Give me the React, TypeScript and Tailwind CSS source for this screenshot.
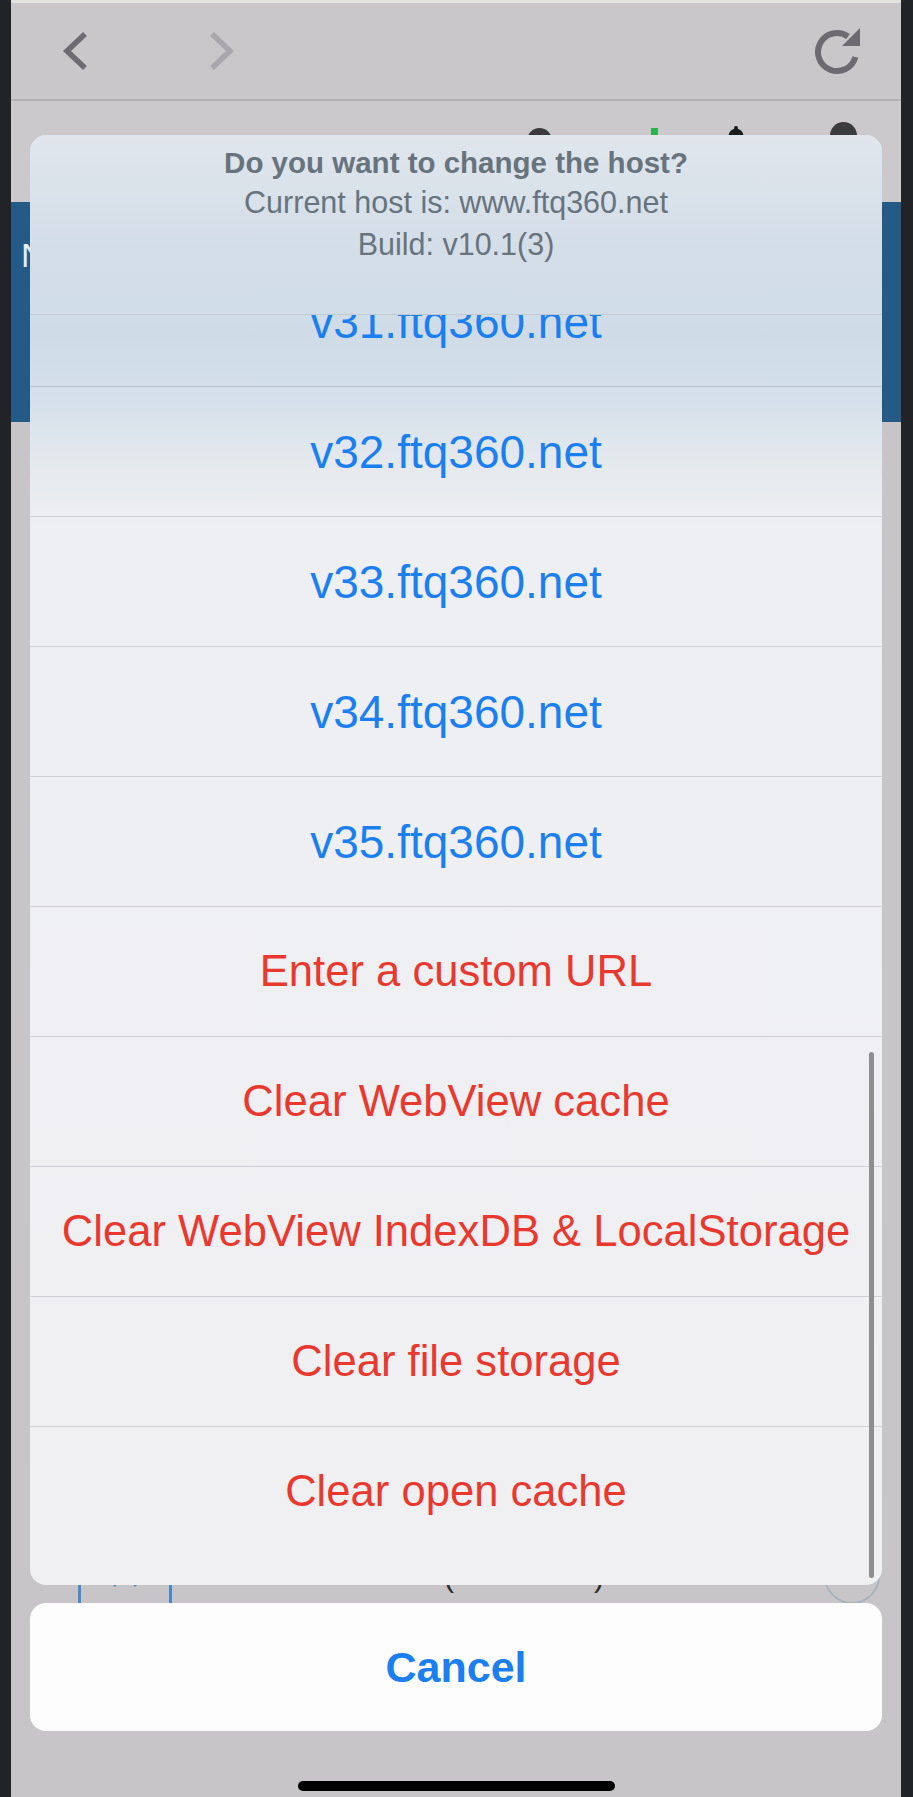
const hosts = ['v31.ftq360.net', 'v32.ftq360.net', 'v33.ftq360.net', 'v34.ftq360.net', 'v35.ftq360.net']

const actions = [
  'Enter a custom URL',
  'Clear WebView cache',
  'Clear WebView IndexDB & LocalStorage',
  'Clear file storage',
  'Clear open cache',
]

function Toolbar() {
  return (
    <div className="flex h-[98px] items-start border-b-2 border-[#b4b2b5] bg-[#c9c7ca]">
      <svg className="ml-[51px] mt-[28px]" width="26" height="40" viewBox="0 0 26 40">
        <polyline points="23,3 5,20 23,37" fill="none" stroke="#6e6c70" strokeWidth="5.5" />
      </svg>
      <svg className="ml-[121px] mt-[28px]" width="26" height="40" viewBox="0 0 26 40">
        <polyline points="3,3 21,20 3,37" fill="none" stroke="#a9a7ab" strokeWidth="5.5" />
      </svg>
      <svg className="ml-auto mr-[40px] mt-[25px]" width="48" height="48" viewBox="-24 -24 48 48">
        <path d="M 18.4 4.9 A 19 19 0 1 1 11 -15.5" fill="none" stroke="#6d6b6f" strokeWidth="6" />
        <polygon points="5,-6 23,-24 23,-6" fill="#6d6b6f" />
      </svg>
    </div>
  )
}

function PageBehind() {
  return (
    <>
      <div className="flex h-[101px] items-start bg-[#cbc9cc]">
        <div className="ml-[516px] mt-[27px] h-[25px] w-[25px] rounded-full bg-[#3a3a3c]" />
        <div className="ml-[99px] mt-[27px] h-[14px] w-[7px] bg-[#2fb14b]" />
        <svg className="ml-[67px] mt-[25px]" width="22" height="26" viewBox="0 0 22 26">
          <path d="M11 0 C9 0 9 2 9 3 C5 4 3 8 3 13 L3 19 L0 22 L22 22 L19 19 L19 13 C19 8 17 4 13 3 C13 2 13 0 11 0 Z" fill="#1c1c1e" />
        </svg>
        <div className="ml-[83px] mt-[21px] h-[27px] w-[27px] rounded-full bg-[#3b3b3d]" />
      </div>
      <div className="h-[220px] bg-[#255a86] pl-[10px] pt-[36px]">
        <span className="text-[34px] leading-none text-[#e6edf3]">N</span>
      </div>
      <div className="flex items-start pt-[1120px]">
        <div className="ml-[67px] flex h-[94px] w-[94px] items-start justify-center rounded-[4px] border-[3px] border-[#4a88c6] pt-[14px]">
          <svg width="40" height="44" viewBox="0 0 40 44">
            <path d="M20 2 L36 22 L30 28 L20 16 L10 28 L4 22 Z" fill="#4d8dcb" />
          </svg>
        </div>
        <span className="ml-[272px] mt-[20px] text-[30px] leading-none text-[#2a2a2a]">(</span>
        <span className="ml-[140px] mt-[20px] text-[30px] leading-none text-[#2a2a2a]">)</span>
        <div className="ml-auto mr-[21px] mt-[6px] h-[56px] w-[56px] rounded-full border-2 border-[#a8b3bc]" />
      </div>
    </>
  )
}

function ActionSheet() {
  return (
    <div className="absolute inset-0 flex flex-col px-[19px] pt-[135px]">
      <div className="relative flex h-[1450px] flex-col overflow-hidden rounded-[16px] bg-[linear-gradient(180deg,#e0e6ec_0px,#d4dee8_110px,#cfdce7_200px,#d5e0ea_265px,#e6eaee_335px,#eeeff2_390px,#f0f0f3_100%)]">
        <div className="h-[180px] shrink-0 border-b border-[#c2cad2] pt-[10px] text-center text-[#67737d]">
          <div className="text-[29.5px] font-bold leading-[36px]">Do you want to change the host?</div>
          <div className="text-[30.5px] leading-[42px]">Current host is: www.ftq360.net</div>
          <div className="text-[30.5px] leading-[42px]">Build: v10.1(3)</div>
        </div>
        <div className="flex-1 overflow-hidden">
          <div className="-mt-[59px]">
            {hosts.map((h) => (
              <div
                key={h}
                className="flex h-[130px] items-center justify-center border-t border-[rgba(60,60,67,0.17)] text-[46px] leading-none text-[#1b7ff0]"
              >
                {h}
              </div>
            ))}
            {actions.map((a) => (
              <div
                key={a}
                className="flex h-[130px] items-center justify-center border-t border-[rgba(60,60,67,0.17)] text-[43.6px] leading-none text-[#e9392f]"
              >
                {a}
              </div>
            ))}
          </div>
        </div>
        <div className="absolute right-[8px] top-[917px] h-[526px] w-[5px] rounded-full bg-[#8e8e91]" />
      </div>
      <div className="mt-[18px] flex h-[128px] items-center justify-center rounded-[16px] bg-[#fcfdfc] text-[43px] font-bold leading-none text-[#1b7ff0]">
        Cancel
      </div>
      <div className="mx-auto mt-[50px] h-[10px] w-[317px] rounded-full bg-black" />
    </div>
  )
}

export default function App() {
  return (
    <div className="flex h-[1797px] w-[913px] bg-[#202427] font-['Liberation_Sans',Arial,sans-serif]">
      <div className="w-[11px] shrink-0" />
      <div className="relative flex w-[890px] shrink-0 flex-col overflow-hidden bg-[#c7c5c8]">
        <div className="h-[3px] bg-[#e4e4de]" />
        <Toolbar />
        <PageBehind />
        <ActionSheet />
      </div>
    </div>
  )
}
